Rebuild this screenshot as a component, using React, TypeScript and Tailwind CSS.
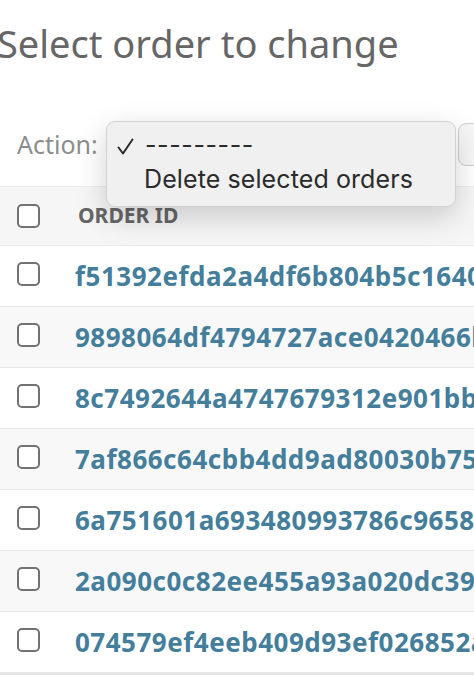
import React from 'react';

const orders = [
  'f51392efda2a4df6b804b5c1640e2a91',
  '9898064df4794727ace0420466b1c3d2',
  '8c7492644a4747679312e901bb4f0a7e',
  '7af866c64cbb4dd9ad80030b75e19c04',
  '6a751601a693480993786c96581d2e3f',
  '2a090c0c82ee455a93a020dc396f7b18',
  '074579ef4eeb409d93ef026852a3c5d9',
];

function Checkbox() {
  return <span className="block h-[24px] w-[23px] shrink-0 rounded-[5px] border-2 border-[#727272] bg-white" />;
}

function ActionMenu() {
  return (
    <div
      className="absolute left-[106px] top-[121px] w-[350px] rounded-[9px] border border-[#d2d2d2] bg-[#f0f0f0] pb-[9px] pt-[7px] text-[25px] text-[#2b2b2b] shadow-[0_10px_30px_rgba(0,0,0,0.18)]"
      style={{ fontFamily: 'Inter, "Liberation Sans", sans-serif' }}
    >
      <div className="flex h-[34px] items-center">
        <svg className="ml-[10px] mr-[11px]" width="17" height="17" viewBox="0 0 17 17" fill="none">
          <path d="M1.5 9.5 L6 15.5 L15.5 1.5" stroke="#2b2b2b" strokeWidth="2" strokeLinecap="round" strokeLinejoin="round" />
        </svg>
        <span className="tracking-[0.6px]">---------</span>
      </div>
      <div className="flex h-[34px] items-center pl-[37px] tracking-[0.1px]">Delete selected orders</div>
    </div>
  );
}

export default function App() {
  return (
    <div
      className="relative h-[698px] w-[474px] overflow-hidden bg-white"
      style={{ fontFamily: '"Noto Sans", "DejaVu Sans", sans-serif' }}
    >
      <h1 className="ml-[-3px] pt-[20px] text-[38px] font-normal leading-[46px] text-[#666]">Select order to change</h1>

      <div className="mt-[56px] flex h-[44px] items-center pl-[17px]">
        <span className="text-[25px] leading-[34px] text-[#8d8d8d]">Action:</span>
        <span className="ml-[10px] h-[43px] w-[340px] shrink-0 rounded-[8px] border border-[#ccc] bg-white" />
        <span className="ml-[10px] h-[43px] w-[60px] shrink-0 rounded-[8px] border border-[#cfcfcf] bg-[#f6f6f6]" />
      </div>

      <div className="mt-[20px] border-b-2 border-[#e4e4e4]">
        <div className="flex h-[60px] items-center border-y border-[#ececec] bg-[#f6f6f6] pl-[17px]">
          <Checkbox />
          <span className="ml-[38px] text-[21px] font-bold uppercase text-[#666]">Order ID</span>
        </div>
        {orders.map((id, i) => (
          <div
            key={id}
            className={`flex h-[61px] items-center border-b border-[#e8e8e8] pl-[17px] ${i % 2 === 1 ? 'bg-[#f8f8f8]' : 'bg-white'}`}
          >
            <span className="mb-[5px]">
              <Checkbox />
            </span>
            <a className="ml-[35px] whitespace-nowrap text-[26px] font-bold tracking-[0.5px] text-[#447e9b]">{id}</a>
          </div>
        ))}
      </div>

      <ActionMenu />
    </div>
  );
}
